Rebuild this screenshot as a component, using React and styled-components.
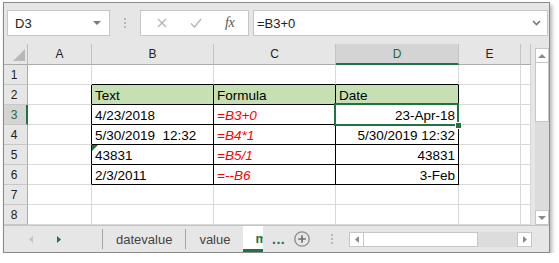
import React from 'react';
import styled, { createGlobalStyle } from 'styled-components';

const GREEN = '#217346';
const GRID = '#d9d9d9';
const CHROME = '#e6e6e6';
const BOX = '#c6c6c6';

const GlobalStyle = createGlobalStyle`
  html, body { margin: 0; padding: 0; background: #fff; }
  body { font-family: "Liberation Sans", Arial, sans-serif; }
`;

const Page = styled.div`
  padding: 2px 0 0 3px;
`;

const Window = styled.div`
  width: 547px;
  height: 251px;
  box-sizing: border-box;
  border: 1px solid #8a8a8a;
  background: ${CHROME};
  box-shadow: 2px 3px 4px rgba(0, 0, 0, 0.3);
  display: flex;
  flex-direction: column;
`;

/* ---------- formula bar ---------- */
const FormulaBar = styled.div`
  height: 41px;
  flex: none;
  box-sizing: border-box;
  display: flex;
  align-items: flex-start;
  padding: 7px 1px 0 3px;
`;

const Field = styled.div`
  height: 26px;
  box-sizing: border-box;
  border: 1px solid ${BOX};
  background: #fff;
  display: flex;
  align-items: center;
  font-size: 13px;
  color: #222;
`;

const NameBox = styled(Field)`
  width: 103px;
  justify-content: space-between;
  padding: 0 8px 0 7px;
`;

const FxBox = styled(Field)`
  width: 109px;
  padding-left: 16px;
  gap: 23px;
`;

const FormulaInput = styled(Field)`
  flex: 1;
  margin-left: 4px;
  justify-content: space-between;
  padding: 0 6px 0 3px;
`;

const Grip = styled.div`
  width: ${p => p.$w || 30}px;
  margin-left: ${p => p.$ml || 0}px;
  height: 26px;
  flex: none;
  display: flex;
  flex-direction: column;
  align-items: center;
  justify-content: center;
  gap: 2px;
`;

const Dot = styled.span`
  width: 2px;
  height: 2px;
  background: #b8b8b8;
`;

const FxLabel = styled.span`
  font-family: "Liberation Serif", "Times New Roman", serif;
  font-style: italic;
  font-size: 14px;
  color: #555;
  letter-spacing: -0.5px;
`;

/* ---------- sheet ---------- */
const SheetArea = styled.div`
  height: 181px;
  flex: none;
  display: flex;
`;

const Grid = styled.div`
  width: 527px;
  display: grid;
  grid-template-columns: 24px 64px 122px 122px 123px 62px 10px;
  grid-template-rows: 21px repeat(8, 20px);
  background: #fff;
`;

const Corner = styled.div`
  box-sizing: border-box;
  background: ${CHROME};
  border-right: 1px solid #bcbcbc;
  border-bottom: 1px solid #ababab;
  display: flex;
  align-items: flex-end;
  justify-content: flex-end;
  padding: 0 2px 3px 0;
`;

const ColHead = styled.div`
  box-sizing: border-box;
  background: ${p => (p.$sel ? '#d4d4d4' : CHROME)};
  border-right: 1px solid #c3c3c3;
  border-bottom: ${p => (p.$sel ? `2px solid ${GREEN}` : '1px solid #ababab')};
  display: flex;
  align-items: center;
  justify-content: center;
  padding-top: ${p => (p.$sel ? 1 : 0)}px;
  font-size: 12px;
  color: ${p => (p.$sel ? '#1e6b40' : '#222')};
`;

const RowHead = styled.div`
  box-sizing: border-box;
  background: ${p => (p.$sel ? '#d4d4d4' : CHROME)};
  border-right: ${p => (p.$sel ? `2px solid ${GREEN}` : '1px solid #ababab')};
  border-bottom: 1px solid #c8c8c8;
  display: flex;
  align-items: center;
  justify-content: center;
  padding-right: ${p => (p.$sel ? 2 : 3)}px;
  font-size: 12px;
  color: ${p => (p.$sel ? '#1e6b40' : '#222')};
`;

const Cell = styled.div`
  box-sizing: border-box;
  position: relative;
  border-right: 1px solid ${p => p.$rb || GRID};
  border-bottom: 1px solid ${p => p.$bb || GRID};
  background: ${p => p.$fill || '#fff'};
  font-size: 13.5px;
  line-height: 16px;
  padding: 3px 3px 0 3px;
  color: ${p => (p.$formula ? '#ff0000' : '#000')};
  font-style: ${p => (p.$formula ? 'italic' : 'normal')};
  text-align: ${p => (p.$right ? 'right' : 'left')};
  white-space: pre;
`;

const Selection = styled.div`
  position: absolute;
  top: -2px;
  left: -2px;
  right: -1px;
  bottom: -2px;
  border: 2px solid ${GREEN};
  z-index: 2;
  pointer-events: none;
`;

const FillHandle = styled.div`
  position: absolute;
  right: -5px;
  bottom: -5px;
  width: 5px;
  height: 5px;
  background: ${GREEN};
  border: 1px solid #fff;
`;

const ErrorMark = styled.div`
  position: absolute;
  top: 0;
  left: 0;
  width: 0;
  height: 0;
  border-top: 6px solid #1e7b3c;
  border-right: 6px solid transparent;
`;

const VScroll = styled.div`
  width: 14px;
  margin-left: 4px;
  padding-top: 4px;
  display: flex;
  flex-direction: column;
`;

const ScrollBtn = styled.div`
  flex: none;
  width: ${p => p.$w || 14}px;
  height: ${p => p.$h || 15}px;
  box-sizing: border-box;
  border: 1px solid ${BOX};
  background: #fff;
  display: flex;
  align-items: center;
  justify-content: center;
`;

const Thumb = styled.div`
  flex: none;
  box-sizing: border-box;
  background: #fff;
  border: 1px solid ${BOX};
  ${p => (p.$vertical ? 'height: 59px; border-top: none;' : 'width: 114px; border-left: none;')}
`;

const Track = styled.div`
  flex: 1;
  background: #dcdcdc;
`;

/* ---------- tab bar ---------- */
const TabBar = styled.div`
  height: 26px;
  flex: none;
  display: flex;
  align-items: center;
  border-top: 1px solid #c4c4c4;
`;

const TabNav = styled.div`
  width: 98px;
  flex: none;
  display: flex;
  align-items: center;
  padding-left: 25px;
  gap: 24px;
  box-sizing: border-box;
`;

const VSep = styled.div`
  width: 1px;
  height: 20px;
  flex: none;
  background: #a6a6a6;
`;

const Tabs = styled.div`
  width: 160px;
  flex: none;
  align-self: stretch;
  display: flex;
  align-items: center;
  overflow: hidden;
`;

const Tab = styled.div`
  flex: none;
  padding: 0 13px;
  font-size: 13px;
  color: #444;
  white-space: nowrap;
`;

const ActiveTab = styled.div`
  flex: none;
  align-self: stretch;
  margin-top: -1px;
  padding: 2px 0 0 12px;
  width: 24px;
  box-sizing: border-box;
  background: #fff;
  border-bottom: 3px solid ${GREEN};
  display: flex;
  align-items: center;
  font-size: 13px;
  font-weight: bold;
  color: ${GREEN};
  white-space: nowrap;
`;

const More = styled.div`
  flex: none;
  margin-left: 9px;
  font-size: 14px;
  font-weight: bold;
  color: ${GREEN};
  letter-spacing: 0.5px;
`;

const AddSheet = styled.div`
  flex: none;
  margin-left: 9px;
  display: flex;
`;

const HScroll = styled.div`
  flex: none;
  width: 183px;
  height: 15px;
  display: flex;
`;

const Tri = ({ dir, color = '#8a8a8a', w = 4, h = 7 }) => {
  const pts = {
    left: `${w},0 0,${h / 2} ${w},${h}`,
    right: `0,0 ${w},${h / 2} 0,${h}`,
    up: `0,${w} ${h / 2},0 ${h},${w}`,
    down: `0,0 ${h},0 ${h / 2},${w}`,
  }[dir];
  const vert = dir === 'up' || dir === 'down';
  return (
    <svg width={vert ? h : w} height={vert ? w : h} viewBox={`0 0 ${vert ? h : w} ${vert ? w : h}`}>
      <polygon points={pts} fill={color} />
    </svg>
  );
};

const cols = ['A', 'B', 'C', 'D', 'E', ''];

const rows = [
  ['', '', '', '', '', ''],
  ['', 'Text', 'Formula', 'Date', '', ''],
  ['', '4/23/2018', '=B3+0', '23-Apr-18', '', ''],
  ['', '5/30/2019  12:32', '=B4*1', '5/30/2019 12:32', '', ''],
  ['', '43831', '=B5/1', '43831', '', ''],
  ['', '2/3/2011', '=--B6', '3-Feb', '', ''],
  ['', '', '', '', '', ''],
  ['', '', '', '', '', ''],
];

export default function App() {
  return (
    <>
      <GlobalStyle />
      <Page>
        <Window>
          <FormulaBar>
            <NameBox>
              <span>D3</span>
              <Tri dir="down" w={4} h={8} color="#7a7a7a" />
            </NameBox>
            <Grip>
              <Dot />
              <Dot />
              <Dot />
            </Grip>
            <FxBox>
              <svg width="10" height="10" viewBox="0 0 10 10">
                <path d="M1 1 L9 9 M9 1 L1 9" stroke="#b4b4b4" strokeWidth="1.3" fill="none" />
              </svg>
              <svg width="12" height="10" viewBox="0 0 12 10">
                <path d="M1 5.5 L4.5 9 L11 1" stroke="#b4b4b4" strokeWidth="1.4" fill="none" />
              </svg>
              <FxLabel>fx</FxLabel>
            </FxBox>
            <FormulaInput>
              <span>=B3+0</span>
              <svg width="9" height="6" viewBox="0 0 9 6">
                <path d="M1 1 L4.5 4.5 L8 1" stroke="#777" strokeWidth="1.6" fill="none" />
              </svg>
            </FormulaInput>
          </FormulaBar>

          <SheetArea>
            <Grid>
              <Corner>
                <svg width="12" height="12" viewBox="0 0 12 12">
                  <polygon points="12,0 12,12 0,12" fill="#b8b8b8" />
                </svg>
              </Corner>
              {cols.map((c, i) => (
                <ColHead key={i} $sel={c === 'D'}>
                  {c}
                </ColHead>
              ))}
              {rows.map((r, ri) => {
                const rowNum = ri + 1;
                const inRows = rowNum >= 2 && rowNum <= 6;
                return (
                  <React.Fragment key={ri}>
                    <RowHead $sel={rowNum === 3}>{rowNum}</RowHead>
                    {r.map((v, ci) => {
                      const inCols = ci >= 1 && ci <= 3;
                      const inTable = inRows && inCols;
                      const rb = inTable || (ci === 0 && inRows) ? '#000' : undefined;
                      const bb = inTable || (rowNum === 1 && inCols) ? '#000' : undefined;
                      const fill = rowNum === 2 && inCols ? '#c6e0b4' : undefined;
                      const isFormula = rowNum > 2 && ci === 2;
                      const isRight = rowNum > 2 && ci === 3;
                      return (
                        <Cell key={ci} $rb={rb} $bb={bb} $fill={fill} $formula={isFormula} $right={isRight}>
                          {v}
                          {rowNum === 5 && ci === 1 && <ErrorMark />}
                          {rowNum === 3 && ci === 3 && (
                            <Selection>
                              <FillHandle />
                            </Selection>
                          )}
                        </Cell>
                      );
                    })}
                  </React.Fragment>
                );
              })}
            </Grid>
            <VScroll>
              <ScrollBtn>
                <Tri dir="up" w={4} h={8} />
              </ScrollBtn>
              <Thumb $vertical />
              <Track />
              <ScrollBtn>
                <Tri dir="down" w={4} h={8} />
              </ScrollBtn>
            </VScroll>
          </SheetArea>

          <TabBar>
            <TabNav>
              <Tri dir="left" color="#c4c4c4" />
              <Tri dir="right" color={GREEN} />
            </TabNav>
            <VSep />
            <Tabs>
              <Tab>datevalue</Tab>
              <VSep />
              <Tab>value</Tab>
              <ActiveTab>m</ActiveTab>
            </Tabs>
            <More>...</More>
            <AddSheet>
              <svg width="16" height="16" viewBox="0 0 16 16">
                <circle cx="8" cy="8" r="7.2" stroke="#8a8a8a" strokeWidth="1.3" fill="none" />
                <path d="M8 4.2 V11.8 M4.2 8 H11.8" stroke="#6e6e6e" strokeWidth="1.6" />
              </svg>
            </AddSheet>
            <Grip $w={34} $ml={5}>
              <Dot />
              <Dot />
              <Dot />
            </Grip>
            <HScroll>
              <ScrollBtn $w={15}>
                <Tri dir="left" />
              </ScrollBtn>
              <Thumb />
              <Track />
              <ScrollBtn $w={15}>
                <Tri dir="right" />
              </ScrollBtn>
            </HScroll>
          </TabBar>
        </Window>
      </Page>
    </>
  );
}
